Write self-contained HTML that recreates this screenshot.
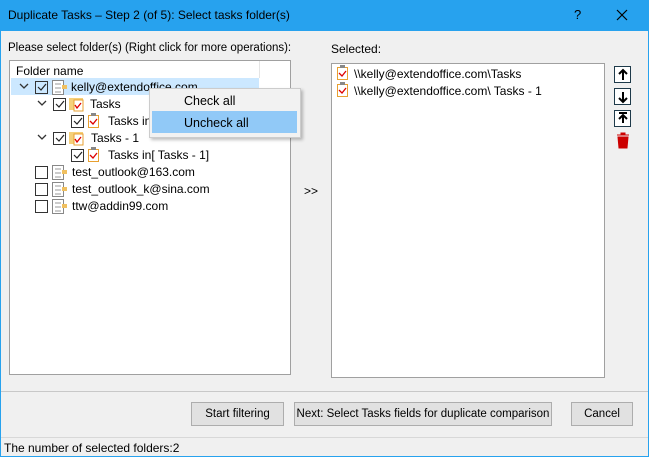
<!DOCTYPE html>
<html><head><style>
*{margin:0;padding:0;box-sizing:border-box}
body{width:649px;height:457px;overflow:hidden;background:#f0f0f0;font-family:"Liberation Sans",sans-serif;font-size:12px;color:#000;position:relative}
.a{position:absolute;white-space:nowrap}
.win{position:absolute;left:0;top:0;width:649px;height:457px;border:1px solid #27a2ee;border-top:none}
.title{position:absolute;left:0;top:0;width:649px;height:31px;background:#27a2ee;color:#000}
.box{position:absolute;background:#fff;border:1px solid #a0a0a0}
.cb{position:absolute;width:13px;height:13px;border:1px solid #333;background:#fff}
.btn{position:absolute;height:24px;border:1px solid #adadad;background:#e1e1e1;text-align:center;line-height:22px;white-space:nowrap;font-size:11.5px}
.sb{position:absolute;width:17px;height:17px;border:1px solid #1e3a4a;background:#fff}
</style></head><body>
<div class="title"><div class="a" style="left:8px;top:8px;font-size:12px">Duplicate Tasks – Step 2 (of 5): Select tasks folder(s)</div>
<div class="a" style="left:574px;top:7px;font-size:13px">?</div>
<svg class="a" style="left:616px;top:9px" width="12" height="12"><path d="M1 1L11 11M11 1L1 11" stroke="#000" stroke-width="1.2"/></svg></div>
<div class="win"></div>

<div class="a" style="left:8px;top:42px;font-size:11.5px">Please select folder(s) (Right click for more operations):</div>
<div class="box" style="left:9px;top:60px;width:282px;height:315px"></div>
<div class="a" style="left:259px;top:61px;width:1px;height:17px;background:#e5e5e5"></div>
<div class="a" style="left:16px;top:64px">Folder name</div>
<div class="a" style="left:11px;top:78px;width:248px;height:17px;background:#cce8ff"></div>

<svg class="a" style="left:0;top:0" width="300" height="220">
<g fill="none" stroke="#333" stroke-width="1.3">
<path d="M20 84l4 4 4-4"/><path d="M38 101l4 4 4-4"/><path d="M38 135l4 4 4-4"/>
</g>
<g fill="none" stroke="#222" stroke-width="1.2">
<path d="M38 87l3 3 5-6"/><path d="M56 104l3 3 5-6"/><path d="M74 121l3 3 5-6"/><path d="M56 138l3 3 5-6"/><path d="M74 155l3 3 5-6"/>
</g>
<g fill="#fff" stroke="#888">
<rect x="52.5" y="80.5" width="11" height="14"/><rect x="52.5" y="165.5" width="11" height="14"/><rect x="52.5" y="182.5" width="11" height="14"/><rect x="52.5" y="199.5" width="11" height="14"/>
</g>
<g stroke="#999"><path d="M55 84h6M55 88h6M55 92h6M55 169h6M55 173h6M55 177h6M55 186h6M55 190h6M55 194h6M55 203h6M55 207h6M55 211h6"/></g>
<g fill="#f0c060"><rect x="62" y="85" width="5" height="4"/><rect x="62" y="170" width="5" height="4"/><rect x="62" y="187" width="5" height="4"/><rect x="62" y="204" width="5" height="4"/></g>
<g><rect x="69" y="98" width="14" height="12" fill="#f5d07a"/><rect x="74" y="100" width="9" height="11" fill="#fff" stroke="#e8a030"/><path d="M75 105l2 3 4-5" stroke="#d00" fill="none" stroke-width="1.3"/>
<rect x="69" y="132" width="14" height="12" fill="#f5d07a"/><rect x="74" y="134" width="9" height="11" fill="#fff" stroke="#e8a030"/><path d="M75 139l2 3 4-5" stroke="#d00" fill="none" stroke-width="1.3"/>
<rect x="88.5" y="115.5" width="10" height="12" fill="#fff" stroke="#e8a030"/><rect x="91" y="113" width="5" height="3" fill="#888"/><path d="M90 121l3 3 4-5" stroke="#d00" fill="none" stroke-width="1.3"/>
<rect x="88.5" y="149.5" width="10" height="12" fill="#fff" stroke="#e8a030"/><rect x="91" y="147" width="5" height="3" fill="#888"/><path d="M90 155l3 3 4-5" stroke="#d00" fill="none" stroke-width="1.3"/></g>
</svg>
<div class="cb" style="left:35px;top:81px;background:transparent"></div>
<div class="cb" style="left:53px;top:98px;background:transparent"></div>
<div class="cb" style="left:71px;top:115px;background:transparent"></div>
<div class="cb" style="left:53px;top:132px;background:transparent"></div>
<div class="cb" style="left:71px;top:149px;background:transparent"></div>
<div class="cb" style="left:35px;top:166px"></div>
<div class="cb" style="left:35px;top:183px"></div>
<div class="cb" style="left:35px;top:200px"></div>
<div class="a" style="left:71px;top:80px">kelly@extendoffice.com</div>
<div class="a" style="left:90px;top:97px">Tasks</div>
<div class="a" style="left:108px;top:114px">Tasks in[</div>
<div class="a" style="left:91px;top:131px">Tasks - 1</div>
<div class="a" style="left:108px;top:148px">Tasks in[ Tasks - 1]</div>
<div class="a" style="left:72px;top:165px">test_outlook@163.com</div>
<div class="a" style="left:72px;top:182px">test_outlook_k@sina.com</div>
<div class="a" style="left:72px;top:199px">ttw@addin99.com</div>

<div class="a" style="left:149px;top:88px;width:152px;height:50px;background:#f2f2f2;border:1px solid #ccc;box-shadow:2px 2px 3px rgba(0,0,0,.25)"></div>
<div class="a" style="left:152px;top:111px;width:145px;height:22px;background:#91c9f7"></div>
<div class="a" style="left:184px;top:94px;font-size:12.5px">Check all</div>
<div class="a" style="left:184px;top:116px;font-size:12.5px">Uncheck all</div>

<div class="a" style="left:304px;top:184px">&gt;&gt;</div>

<div class="a" style="left:331px;top:42px">Selected:</div>
<div class="box" style="left:331px;top:63px;width:274px;height:315px"></div>
<svg class="a" style="left:336px;top:64px" width="14" height="40">
<rect x="1.5" y="3.5" width="10" height="12" fill="#fff" stroke="#e8a030"/><rect x="4" y="1" width="5" height="3" fill="#888"/><path d="M3 9l3 3 4-5" stroke="#d00" fill="none" stroke-width="1.3"/>
<rect x="1.5" y="20.5" width="10" height="12" fill="#fff" stroke="#e8a030"/><rect x="4" y="18" width="5" height="3" fill="#888"/><path d="M3 26l3 3 4-5" stroke="#d00" fill="none" stroke-width="1.3"/></svg>
<div class="a" style="left:354px;top:67px">\\kelly@extendoffice.com\Tasks</div>
<div class="a" style="left:354px;top:84px">\\kelly@extendoffice.com\ Tasks - 1</div>

<div class="sb" style="left:614px;top:66px"></div><div class="sb" style="left:614px;top:88px"></div><div class="sb" style="left:614px;top:110px"></div>
<svg class="a" style="left:614px;top:66px" width="18" height="100">
<path d="M9 4v10M5 8l4-4 4 4" stroke="#000" stroke-width="2" fill="none"/>
<path d="M9 26v10M5 32l4 4 4-4" stroke="#000" stroke-width="2" fill="none"/>
<path d="M5 47h8M9 50v7M5 53l4-4 4 4" stroke="#000" stroke-width="2" fill="none"/>
<path d="M3 69h12M7 69v-2h4v2M4 71h10l-1 11H5z" fill="#c00" stroke="#c00"/>
</svg>

<div class="a" style="left:1px;top:391px;width:647px;height:1px;background:#c8c8c8"></div>
<div class="btn" style="left:191px;top:402px;width:93px">Start filtering</div>
<div class="btn" style="left:294px;top:402px;width:258px">Next: Select Tasks fields for duplicate comparison</div>
<div class="btn" style="left:571px;top:402px;width:62px">Cancel</div>
<div class="a" style="left:1px;top:437px;width:647px;height:1px;background:#d8d8d8"></div>
<div class="a" style="left:4px;top:441px">The number of selected folders:2</div>
</body></html>
